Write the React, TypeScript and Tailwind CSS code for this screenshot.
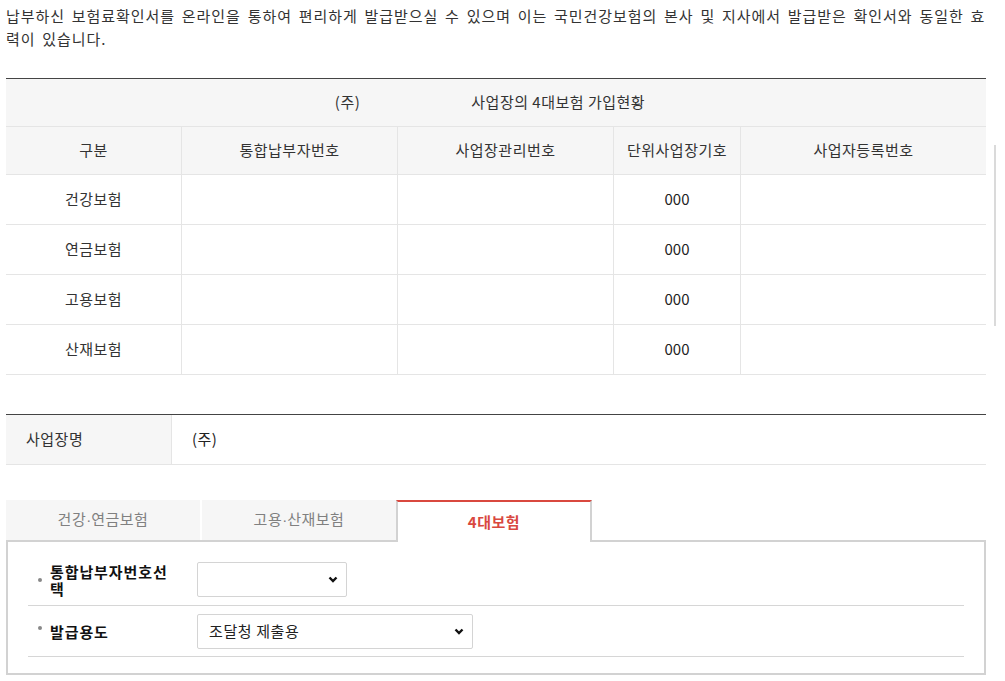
const rows = ['건강보험', '연금보험', '고용보험', '산재보험'];
const heads = ['구분', '통합납부자번호', '사업장관리번호', '단위사업장기호', '사업자등록번호'];

function Chevron() {
  return (
    <svg width="10" height="7" viewBox="0 0 10 7" className="pointer-events-none">
      <polyline points="1.5,1.5 5,5 8.5,1.5" fill="none" stroke="#111" strokeWidth="2.4" />
    </svg>
  );
}

function SelectBox({ width, value }: { width: string; value?: string }) {
  return (
    <div className={`${width} h-[35px] flex items-center justify-between border border-[#d4d4d4] rounded-[2px] bg-white pl-[11px] pr-[8px] text-[15px] tracking-[0.6px] text-[#222]`}>
      <span>{value ?? ''}</span>
      <Chevron />
    </div>
  );
}

function Dot() {
  return <span className="font-['Liberation_Sans',sans-serif] tracking-normal">·</span>;
}

export default function App() {
  return (
    <div className="relative w-[1005px] min-h-[681px] bg-white font-['Noto_Sans_CJK_KR','Noto_Sans',sans-serif] text-[#333]">
      <div className="w-[992px] px-[6px]">
        <p className="pt-[4px] text-[15px] leading-[23px] tracking-[0.95px] [word-spacing:2.5px] text-[#333]">
          납부하신 보험료확인서를 온라인을 통하여 편리하게 발급받으실 수 있으며 이는 국민건강보험의 본사 및 지사에서 발급받은 확인서와 동일한 효력이 있습니다.
        </p>

        {/* 가입현황 표 */}
        <div className="mt-[28px] border-t border-[#444] text-[15px] tracking-[0.5px]">
          <div className="h-[48px] flex items-center justify-center pr-[12px] bg-[#f6f6f6] border-b border-[#e5e5e5]">
            <span>(주)</span>
            <span className="inline-block w-[111px]" />
            <span>사업장의 4대보험 가입현황</span>
          </div>
          <div className="grid grid-cols-[175px_216px_216px_127px_1fr] h-[48px] bg-[#f6f6f6] border-b border-[#e5e5e5]">
            {heads.map((h, i) => (
              <div key={h} className={`flex items-center justify-center ${i > 0 ? 'border-l border-[#e5e5e5]' : ''}`}>
                {h}
              </div>
            ))}
          </div>
          {rows.map((r) => (
            <div key={r} className="grid grid-cols-[175px_216px_216px_127px_1fr] h-[50px] border-b border-[#e5e5e5]">
              <div className="flex items-center justify-center">{r}</div>
              <div className="border-l border-[#e5e5e5]" />
              <div className="border-l border-[#e5e5e5]" />
              <div className="flex items-center justify-center border-l border-[#e5e5e5] text-[#222] tracking-normal">000</div>
              <div className="border-l border-[#e5e5e5]" />
            </div>
          ))}
        </div>

        {/* 사업장명 */}
        <div className="mt-[39px] flex h-[51px] border-t border-[#444] border-b border-b-[#e5e5e5] text-[15px] tracking-[0.5px]">
          <div className="w-[166px] flex items-center pl-[20px] bg-[#f6f6f6] border-r border-[#e5e5e5]">사업장명</div>
          <div className="flex-1 flex items-center pl-[20px] text-[#222]">(주)</div>
        </div>

        {/* 탭 */}
        <div className="mt-[35px] flex h-[42px] text-[15px] tracking-[0.5px]">
          <div className="w-[194px] flex items-center justify-center bg-[#f6f6f6] border-b-2 border-[#d2d2d2] text-[#808080]">
            <span>건강<Dot />연금보험</span>
          </div>
          <div className="w-[2px] border-b-2 border-[#d2d2d2]" />
          <div className="w-[194px] flex items-center justify-center bg-[#f6f6f6] border-b-2 border-[#d2d2d2] text-[#808080]">
            <span>고용<Dot />산재보험</span>
          </div>
          <div className="w-[196px] flex items-center justify-center bg-white border-t-2 border-t-[#d9483f] border-x-2 border-x-[#d2d2d2] font-bold text-[#d9483f]">4대보험</div>
          <div className="flex-1 border-b-2 border-[#d2d2d2]" />
        </div>
        <div className="border-x-2 border-b-2 border-[#d2d2d2] pt-[12px] pb-[16px] px-[20px]">
          <div className="h-[52px] flex items-center border-b border-[#d6d6d6] pl-[10px]">
            <span className="w-[4px] h-[4px] rounded-full bg-[#888] mr-[8px]" />
            <span className="w-[125px] text-[15px] leading-[17px] tracking-[0.9px] font-bold text-[#111]">통합납부자번호선택</span>
            <div className="ml-[22px]">
              <SelectBox width="w-[150px]" />
            </div>
          </div>
          <div className="h-[51px] flex items-center border-b border-[#d6d6d6] pl-[10px]">
            <span className="w-[4px] h-[4px] rounded-full bg-[#888] mr-[8px] -mt-[6px]" />
            <span className="w-[125px] text-[15px] leading-[17px] tracking-[0.9px] font-bold text-[#111]">발급용도</span>
            <div className="ml-[22px]">
              <SelectBox width="w-[276px]" value="조달청 제출용" />
            </div>
          </div>
        </div>
      </div>

      <div className="absolute left-[994px] top-[145px] w-[2px] h-[181px] bg-[#dadada]" />
    </div>
  );
}
